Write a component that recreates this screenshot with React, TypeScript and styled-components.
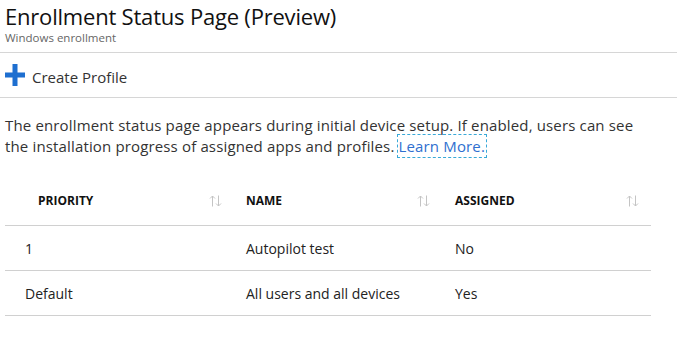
import React from 'react'
import styled, { createGlobalStyle } from 'styled-components'

const GlobalStyle = createGlobalStyle`
  body {
    margin: 0;
    background: #fff;
    font-family: 'Open Sans', 'Liberation Sans', sans-serif;
    color: #323130;
  }
`

const Page = styled.div`
  width: 677px;
  height: 340px;
  overflow: hidden;
`

const Header = styled.div`
  padding: 2px 0 0 5px;
  height: 53px;
  box-sizing: border-box;
  border-bottom: 1px solid #d6d6d6;
`

const Title = styled.h1`
  margin: 0;
  font-size: 22px;
  font-weight: 400;
  line-height: 28px;
  color: #111;
  letter-spacing: -0.2px;
`

const Subtitle = styled.div`
  font-size: 11.5px;
  line-height: 15px;
  color: #666;
`

const Toolbar = styled.div`
  display: flex;
  align-items: center;
  gap: 7px;
  height: 45px;
  padding: 0 0 0 5px;
  box-sizing: border-box;
  border-bottom: 1px solid #d6d6d6;
`

const ToolbarLabel = styled.span`
  font-size: 15px;
  color: #333;
  padding-top: 3px;
`

const Intro = styled.p`
  margin: 17px 0 0 5px;
  font-size: 15px;
  line-height: 21px;
  letter-spacing: 0.15px;
  color: #333;
  white-space: nowrap;
`

const Link = styled.a`
  color: #2f6fcf;
  text-decoration: none;
  outline: 1px dashed #39a9d8;
  outline-offset: 1px;
`

const Table = styled.div`
  margin: 17px 0 0 5px;
  width: 646px;
`

const Row = styled.div<{ $head?: boolean }>`
  display: grid;
  grid-template-columns: 229px 208px 209px;
  height: ${p => (p.$head ? '51px' : '44px')};
  border-bottom: 1px solid #d0d0d0;
  align-items: center;
`

const HeadCell = styled.div<{ $pad: number }>`
  display: flex;
  align-items: center;
  justify-content: space-between;
  padding: 0 12px 0 ${p => p.$pad}px;
  font-size: 12px;
  font-weight: 700;
  color: #111;
  padding-top: 2px;
`

const Cell = styled.div<{ $pad: number }>`
  padding: 1px 0 0 ${p => p.$pad}px;
  font-size: 14px;
  color: #222;
`

const Plus = () => (
  <svg width="20" height="22" viewBox="0 0 20 22">
    <rect x="7.5" y="0" width="5" height="22" fill="#1e6fd0" />
    <rect x="0" y="8.5" width="20" height="5" fill="#1e6fd0" />
  </svg>
)

const SortIcon = () => (
  <svg width="13" height="12" viewBox="0 0 13 12" fill="none" stroke="#c4c4c4" strokeWidth="1">
    <path d="M3.5 11.5V1M1 3.5l2.5-2.5 2.5 2.5" />
    <path d="M9.5 0.5V11M7 8.5l2.5 2.5 2.5-2.5" />
  </svg>
)

const columns = [
  { label: 'PRIORITY', head: 33, cell: 20 },
  { label: 'NAME', head: 12, cell: 12 },
  { label: 'ASSIGNED', head: 13, cell: 13 },
]

const rows = [
  ['1', 'Autopilot test', 'No'],
  ['Default', 'All users and all devices', 'Yes'],
]

export default function App() {
  return (
    <Page>
      <GlobalStyle />
      <Header>
        <Title>Enrollment Status Page (Preview)</Title>
        <Subtitle>Windows enrollment</Subtitle>
      </Header>
      <Toolbar>
        <Plus />
        <ToolbarLabel>Create Profile</ToolbarLabel>
      </Toolbar>
      <Intro>
        The enrollment status page appears during initial device setup. If enabled, users can see
        <br />
        the installation progress of assigned apps and profiles. <Link href="#">Learn More.</Link>
      </Intro>
      <Table>
        <Row $head>
          {columns.map(c => (
            <HeadCell key={c.label} $pad={c.head}>
              <span>{c.label}</span>
              <SortIcon />
            </HeadCell>
          ))}
        </Row>
        {rows.map(r => (
          <Row key={r[0]}>
            {r.map((v, i) => (
              <Cell key={i} $pad={columns[i].cell}>
                {v}
              </Cell>
            ))}
          </Row>
        ))}
      </Table>
    </Page>
  )
}
